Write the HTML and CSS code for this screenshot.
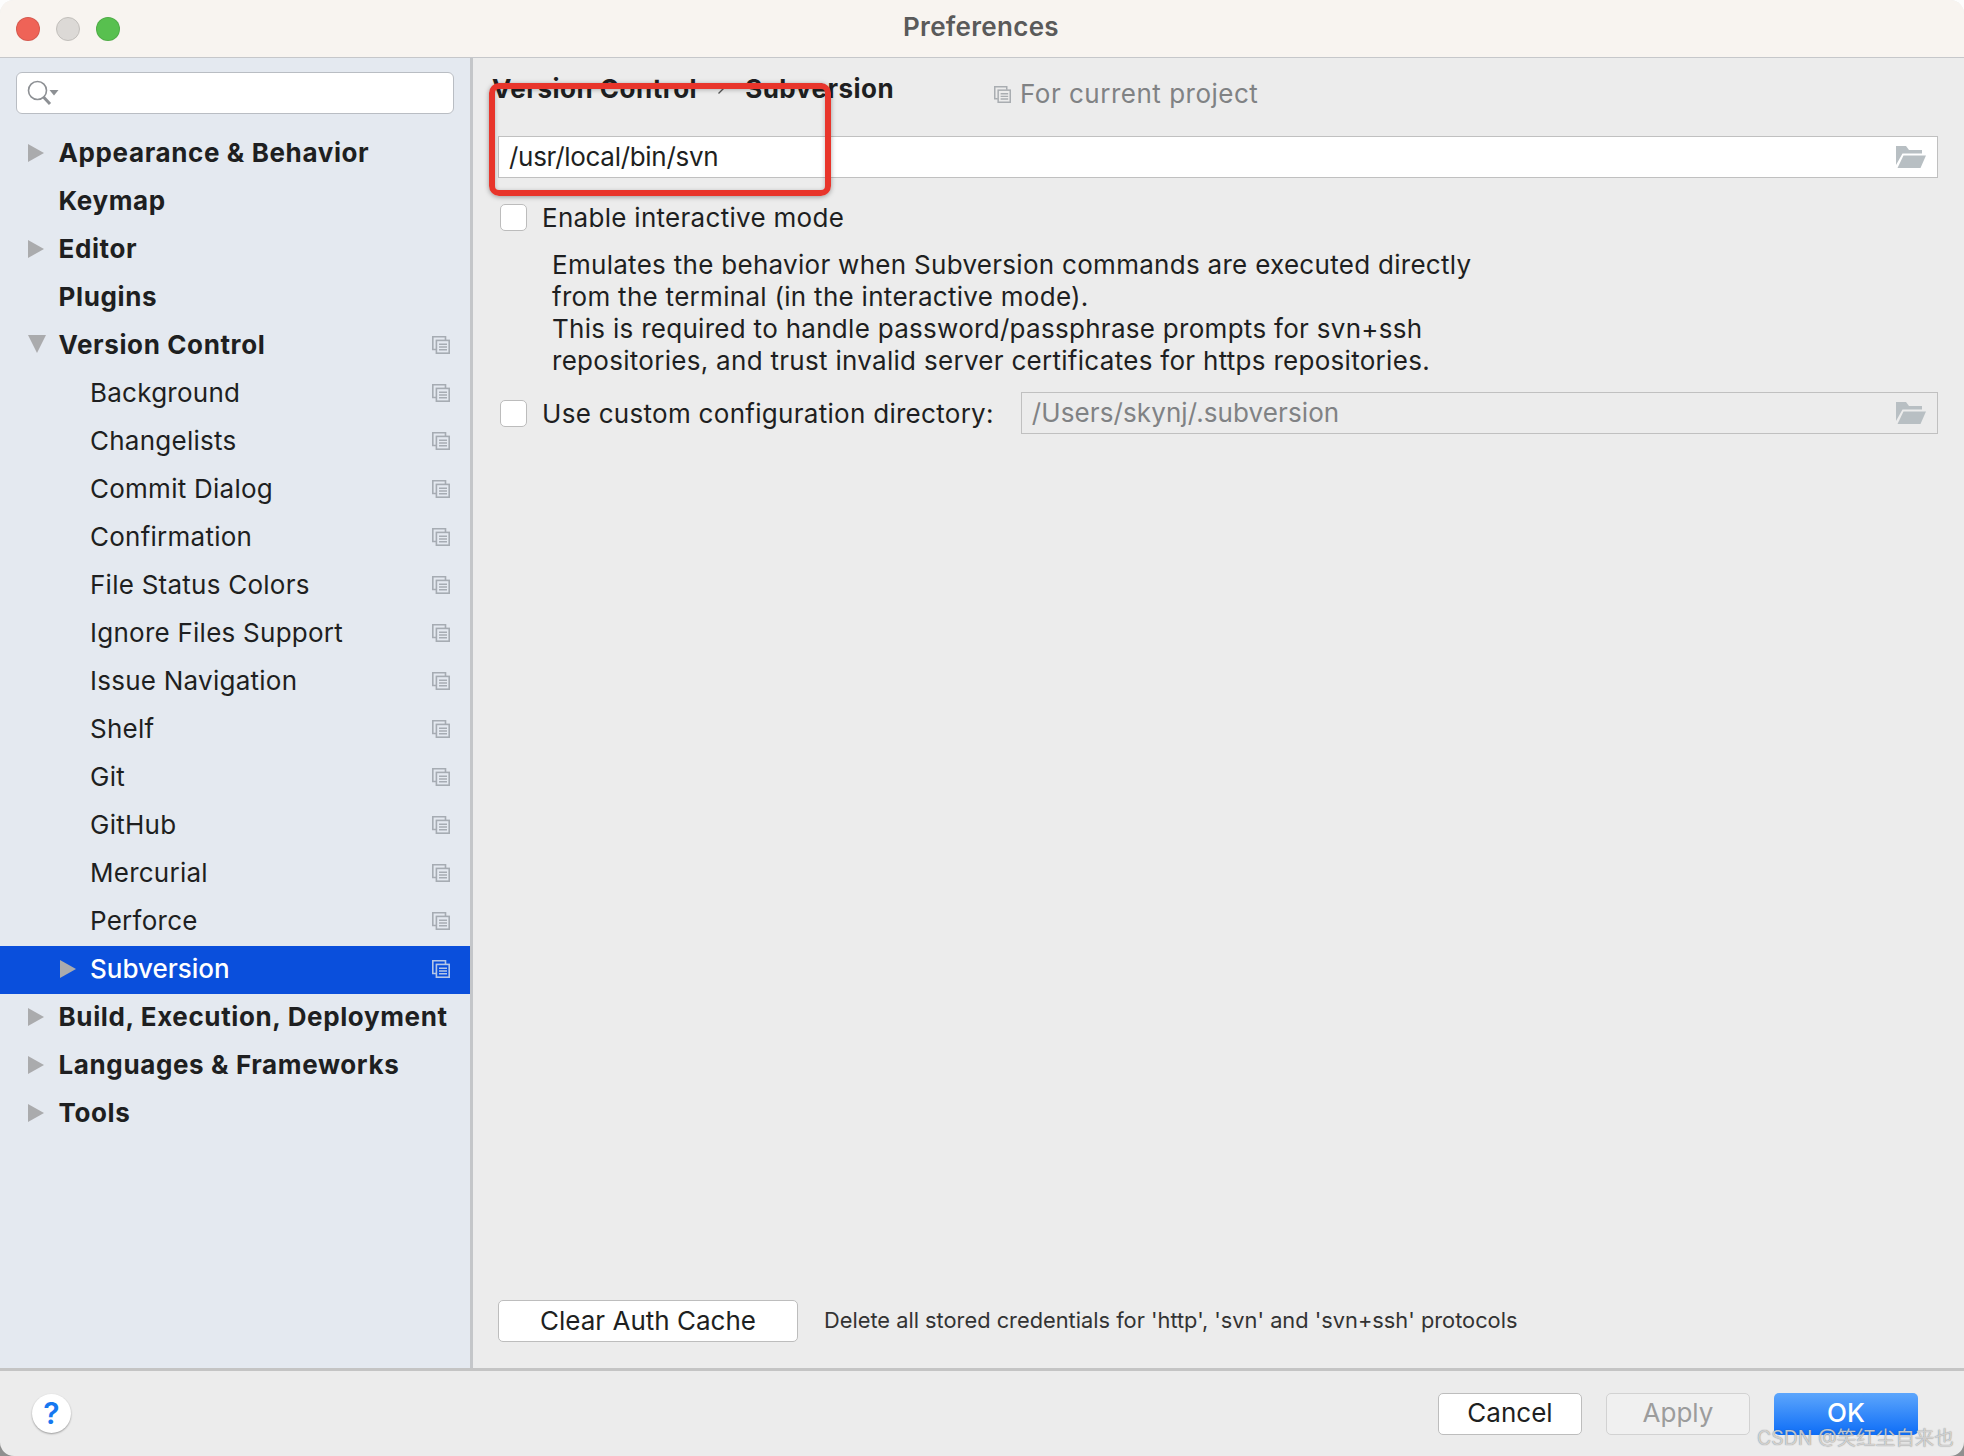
FILE: index.html
```html
<!DOCTYPE html>
<html lang="en">
<head>
<meta charset="utf-8">
<title>Preferences</title>
<link rel="stylesheet" href="styles.css">
</head>
<body>
<svg class="defs" width="0" height="0" aria-hidden="true">
  <defs>
    <symbol id="copy" viewBox="0 0 18 18">
      <path d="M4 13.5H.8V.8H13.5V4" fill="none" stroke="currentColor" stroke-width="1.6"/>
      <rect x="4.4" y="4.4" width="12.8" height="12.8" fill="none" stroke="currentColor" stroke-width="1.6"/>
      <path d="M7 8.2H15M7 11H15M7 13.8H15" fill="none" stroke="currentColor" stroke-width="1.4"/>
    </symbol>
    <symbol id="right" viewBox="0 0 16 18"><path d="M0 0L16 9L0 18Z" fill="currentColor"/></symbol>
    <symbol id="folder" viewBox="0 0 30 22">
      <path d="M0 0H10L13 4H26V7.5H6.5L0 19Z" fill="currentColor"/>
      <path d="M7.5 9.5H30L24.5 22H1.5Z" fill="currentColor"/>
    </symbol>
  </defs>
</svg>
<div class="window">
  <header class="titlebar">
    <div class="lights">
      <span class="light light-red"></span>
      <span class="light light-gray"></span>
      <span class="light light-green"></span>
    </div>
    <div class="title">Preferences</div>
    <div></div>
  </header>
  <div class="main">
    <aside class="sidebar">
      <div class="search">
        <svg class="search-icon" width="32" height="28" viewBox="0 0 32 28">
          <circle cx="10.5" cy="11.5" r="9" fill="none" stroke="#8d9094" stroke-width="1.6"/>
          <path d="M16.5 18L23 25" stroke="#8d9094" stroke-width="3"/>
          <path d="M22.5 11H31.5L27 16.5Z" fill="#8d9094"/>
        </svg>
      </div>
      <ul class="tree">
        <li class="row top"><svg class="arrow"><use href="#right"/></svg><span class="label">Appearance &amp; Behavior</span></li>
        <li class="row top"><span class="label">Keymap</span></li>
        <li class="row top"><svg class="arrow"><use href="#right"/></svg><span class="label">Editor</span></li>
        <li class="row top"><span class="label">Plugins</span></li>
        <li class="row top"><svg class="arrow arrow-down" viewBox="0 0 18 18"><path d="M0 0H18L9 18Z" fill="currentColor"/></svg><span class="label">Version Control</span><svg class="copy"><use href="#copy"/></svg></li>
        <li class="row child"><span class="label">Background</span><svg class="copy"><use href="#copy"/></svg></li>
        <li class="row child"><span class="label">Changelists</span><svg class="copy"><use href="#copy"/></svg></li>
        <li class="row child"><span class="label">Commit Dialog</span><svg class="copy"><use href="#copy"/></svg></li>
        <li class="row child"><span class="label">Confirmation</span><svg class="copy"><use href="#copy"/></svg></li>
        <li class="row child"><span class="label">File Status Colors</span><svg class="copy"><use href="#copy"/></svg></li>
        <li class="row child"><span class="label">Ignore Files Support</span><svg class="copy"><use href="#copy"/></svg></li>
        <li class="row child"><span class="label">Issue Navigation</span><svg class="copy"><use href="#copy"/></svg></li>
        <li class="row child"><span class="label">Shelf</span><svg class="copy"><use href="#copy"/></svg></li>
        <li class="row child"><span class="label">Git</span><svg class="copy"><use href="#copy"/></svg></li>
        <li class="row child"><span class="label">GitHub</span><svg class="copy"><use href="#copy"/></svg></li>
        <li class="row child"><span class="label">Mercurial</span><svg class="copy"><use href="#copy"/></svg></li>
        <li class="row child"><span class="label">Perforce</span><svg class="copy"><use href="#copy"/></svg></li>
        <li class="row child selected"><svg class="arrow"><use href="#right"/></svg><span class="label">Subversion</span><svg class="copy"><use href="#copy"/></svg></li>
        <li class="row top"><svg class="arrow"><use href="#right"/></svg><span class="label">Build, Execution, Deployment</span></li>
        <li class="row top"><svg class="arrow"><use href="#right"/></svg><span class="label">Languages &amp; Frameworks</span></li>
        <li class="row top"><svg class="arrow"><use href="#right"/></svg><span class="label">Tools</span></li>
      </ul>
    </aside>
    <section class="panel">
      <div class="crumbs">
        <div class="crumb-path">
          <span>Version Control</span>
          <svg class="crumb-sep" width="8" height="12" viewBox="0 0 8 12"><path d="M1.5 1.5L6 6L1.5 10.5" fill="none" stroke="#555" stroke-width="1.4"/></svg>
          <span>Subversion</span>
        </div>
        <div class="scope"><svg class="copy scope-icon"><use href="#copy"/></svg>For current project</div>
      </div>
      <div class="field">
        <span class="field-text field-path">/usr/local/bin/svn</span>
        <svg class="folder"><use href="#folder"/></svg>
      </div>
      <label class="check check-first"><span class="box"></span>Enable interactive mode</label>
      <div class="desc">
        <div>Emulates the behavior when Subversion commands are executed directly</div>
        <div>from the terminal (in the interactive mode).</div>
        <div>This is required to handle password/passphrase prompts for svn+ssh</div>
        <div>repositories, and trust invalid server certificates for https repositories.</div>
      </div>
      <div class="config-row">
        <label class="check"><span class="box"></span>Use custom configuration directory:</label>
        <div class="field field-disabled">
          <span class="field-text">/Users/skynj/.subversion</span>
          <svg class="folder"><use href="#folder"/></svg>
        </div>
      </div>
      <div class="auth-row">
        <button class="btn btn-auth">Clear Auth Cache</button>
        <span class="auth-note">Delete all stored credentials for 'http', 'svn' and 'svn+ssh' protocols</span>
      </div>
    </section>
  </div>
  <footer class="footer">
    <button class="help">?</button>
    <div class="actions">
      <button class="btn">Cancel</button>
      <button class="btn btn-disabled">Apply</button>
      <button class="btn btn-primary">OK</button>
    </div>
  </footer>
  <div class="annotation"></div>
  <div class="watermark">CSDN @笑红尘自来也</div>
</div>
</body>
</html>
```
FILE: styles.css
```css
* { box-sizing: border-box; }
html, body { margin: 0; padding: 0; }
body {
  width: 1964px;
  height: 1456px;
  overflow: hidden;
  background: linear-gradient(#fdfdfd 0 50%, #8f8f8f 50% 100%);
  font-family: Inter, "Noto Sans CJK SC", sans-serif;
  color: #1e1f21;
}
.defs { position: absolute; }
.window {
  position: relative;
  width: 1964px;
  height: 1456px;
  display: flex;
  flex-direction: column;
  background: #ececec;
  border-radius: 14px;
  overflow: hidden;
}
.titlebar {
  flex: none;
  height: 58px;
  background: #f8f4f0;
  border-bottom: 1.5px solid #c6c7ca;
  display: grid;
  grid-template-columns: 1fr auto 1fr;
  align-items: center;
  padding-left: 16px;
  padding-right: 18px;
}
.lights { display: flex; gap: 16px; }
.light { width: 24px; height: 24px; border-radius: 50%; border: 1px solid rgba(0,0,0,.1); }
.light-red { background: #ef6357; }
.light-gray { background: #dcd9d6; border-color: #c2bfbb; }
.light-green { background: #58c04f; }
.title { font-size: 26px; line-height: 30px; margin-bottom: 4px; font-weight: 600; letter-spacing: .3px; color: #5a5a5a; }
.main { flex: 1; min-height: 0; display: flex; }
.sidebar {
  flex: none;
  width: 473px;
  background: #e4e9f0;
  border-right: 3px solid #c4c6c9;
  padding-top: 14px;
}
.search {
  width: 438px;
  height: 42px;
  margin-left: 16px;
  background: #fff;
  border: 1.5px solid #b9bdc3;
  border-radius: 6px;
  display: flex;
  align-items: center;
  padding-left: 10px;
}
.tree { list-style: none; margin: 16px 0 0; padding: 0; }
.row {
  height: 48px;
  padding-bottom: 2px;
  display: flex;
  align-items: center;
  position: relative;
  font-size: 26px;
  line-height: 1;
}
.top { padding-left: 58.5px; font-weight: 700; letter-spacing: .62px; }
.child { padding-left: 90px; font-weight: 400; letter-spacing: .25px; }
.arrow {
  position: absolute;
  left: 28px;
  top: 14px;
  width: 16px;
  height: 18px;
  color: #aaabad;
}
.arrow-down { width: 18px; top: 13px; }
.child .arrow { left: 60px; }
.copy {
  position: absolute;
  left: 432px;
  top: 14px;
  width: 18px;
  height: 18px;
  color: #a6acb3;
}
.selected { background: #0a4fdc; color: #fff; font-weight: 500; letter-spacing: 0; }
.selected .copy { color: #b4c6e6; }
.panel {
  flex: 1;
  min-width: 0;
  display: flex;
  flex-direction: column;
  padding: 0 26px 26px 25px;
  letter-spacing: .29px;
}
.crumbs { height: 78px; display: flex; align-items: flex-start; margin-left: -6px; padding-top: 16px; }
.crumb-path { width: 502px; display: flex; align-items: center; gap: 20px; font-size: 26px; font-weight: 700; line-height: 30px; letter-spacing: .5px; }
.crumb-sep { flex: none; }
.scope { display: flex; align-items: center; gap: 9px; font-size: 26px; line-height: 30px; letter-spacing: .5px; color: #808284; padding-top: 5px; }
.scope-icon { position: static; width: 17px; height: 17px; color: #a9adb1; }
.field {
  height: 42px;
  background: #fff;
  border: 1.5px solid #c0c0c0;
  display: flex;
  align-items: center;
  justify-content: space-between;
  padding: 0 11px 0 10px;
  font-size: 26px;
}
.field-text { line-height: 1; letter-spacing: .1px; }
.field-path { letter-spacing: -.3px; }
.folder { width: 30px; height: 22px; color: #b8bfc3; }
.check { display: flex; align-items: center; gap: 15px; font-size: 26px; }
.check-first { margin-top: 23px; height: 32px; }
.box {
  flex: none;
  width: 27px;
  height: 27px;
  margin-left: 2px;
  background: #fff;
  border: 1px solid #bcbcbc;
  border-radius: 5px;
}
.desc { margin: 16px 0 0 54px; font-size: 26px; line-height: 32px; }
.config-row { display: flex; align-items: center; margin-top: 15px; gap: 27px; }
.config-row .field { flex: 1; min-width: 0; }
.field-disabled { background: #ececec; color: #808284; }
.auth-row { margin-top: auto; display: flex; align-items: center; gap: 26px; }
.auth-note { font-size: 21.8px; margin-bottom: 2px; letter-spacing: 0; color: #333; }
.btn {
  width: 144px;
  height: 42px;
  padding: 0 0 2px;
  font-family: inherit;
  font-size: 26px;
  color: #1e1f21;
  background: #fff;
  border: 1px solid #bdbdbd;
  border-radius: 5px;
  line-height: 1;
}
.btn-auth { width: 300px; padding: 0; }
.btn-disabled { background: #f0f0f0; color: #9c9c9c; border-color: #d2d2d2; }
.btn-primary {
  background: linear-gradient(#5da6fc, #0d6df7);
  border: none;
  color: #fff;
  font-weight: 500;
}
.footer {
  flex: none;
  height: 88px;
  border-top: 3px solid #c4c4c4;
  display: flex;
  align-items: center;
  justify-content: space-between;
  padding: 0 46px 0 32px;
}
.help {
  width: 39px;
  height: 39px;
  padding: 0 0 2px;
  border: none;
  border-radius: 50%;
  background: #fff;
  box-shadow: 0 1px 2px rgba(0,0,0,.35);
  color: #1678f0;
  font-family: inherit;
  font-size: 30px;
  font-weight: 600;
  line-height: 1;
}
.actions { display: flex; gap: 24px; }
.annotation {
  position: absolute;
  left: 489px;
  top: 83px;
  width: 342px;
  height: 113px;
  border: 6px solid #e8352b;
  border-radius: 10px;
  box-shadow: 0 1px 5px rgba(0,0,0,.35), inset 0 1px 4px rgba(0,0,0,.25);
}
.watermark {
  position: absolute;
  left: 1757px;
  top: 1425px;
  font-size: 19.5px;
  line-height: 26px;
  white-space: nowrap;
  color: rgba(236,236,236,.75);
  text-shadow: 0 0 1px rgba(70,70,70,.75);
}
```
